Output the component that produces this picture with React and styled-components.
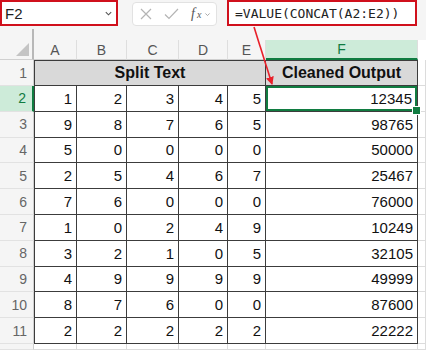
import React from 'react'
import styled, { createGlobalStyle, css } from 'styled-components'

const GlobalStyle = createGlobalStyle`
  html, body {
    margin: 0;
    padding: 0;
    background: #fff;
  }
  * {
    box-sizing: border-box;
  }
`

const GREEN = '#107c41'
const RED = '#d0101c'
const TABLE_LINE = '#3c3c3c'
const GRID_LINE = '#dcdcdc'

const Page = styled.div`
  position: relative;
  width: 426px;
  height: 350px;
  overflow: hidden;
  background: #fff;
  font-family: 'Liberation Sans', Arial, sans-serif;
`

const TopBar = styled.div`
  display: flex;
  align-items: flex-start;
  height: 40px;
  background: #f5f5f5;
`

const NameBox = styled.div`
  display: flex;
  align-items: center;
  justify-content: space-between;
  width: 118px;
  height: 26px;
  padding: 0 3px 0 3px;
  background: #fff;
  border: 2px solid ${RED};
  font-size: 15px;
  color: #222;
`

const Chevron = ({ size = 9, color = '#555' }) => (
  <svg width={size} height={size} viewBox="0 0 10 10">
    <path d="M2 3.5 L5 6.5 L8 3.5" fill="none" stroke={color} strokeWidth="1.2" />
  </svg>
)

const IconBox = styled.div`
  display: flex;
  align-items: center;
  gap: 12px;
  width: 85px;
  height: 24px;
  margin: 2px 0 0 14px;
  padding: 0 0 0 7px;
  background: #fff;
  border: 1px solid #e2e2e2;
  border-radius: 4px;
`

const Fx = styled.span`
  display: flex;
  align-items: center;
  gap: 3px;
  font-family: 'Liberation Serif', serif;
  font-style: italic;
  font-size: 14px;
  color: #555;
  & sub {
    font-size: 10px;
    vertical-align: baseline;
    margin-left: -1px;
  }
`

const FormulaBox = styled.div`
  display: flex;
  align-items: center;
  width: 190px;
  height: 26px;
  margin-left: 10px;
  padding-left: 6px;
  background: #fff;
  border: 2px solid ${RED};
  font-family: 'DejaVu Sans Mono', 'Liberation Mono', monospace;
  font-size: 13px;
  color: #222;
`

const Grid = styled.div`
  display: grid;
  grid-template-columns: 34px 43px 50px 52px 49px 38px 152px 8px;
  grid-template-rows: 20px 26px repeat(10, 25.8px) 1fr;
  height: 310px;
`

const Corner = styled.div`
  position: relative;
  background: #f5f5f5;
  border-right: 2px solid #b8b8b8;
  border-bottom: 1px solid #d0d0d0;
  &::before {
    content: '';
    position: absolute;
    right: -2px;
    top: -11px;
    width: 2px;
    height: 11px;
    background: #b8b8b8;
  }
  &::after {
    content: '';
    position: absolute;
    right: 3px;
    bottom: 3px;
    width: 0;
    height: 0;
    border-left: 13px solid transparent;
    border-bottom: 13px solid #c4c4c4;
  }
`

const ColHead = styled.div`
  display: flex;
  align-items: center;
  justify-content: center;
  background: #f5f5f5;
  border-right: 1px solid #dedede;
  border-bottom: 1px solid #d0d0d0;
  font-size: 14px;
  color: #555;
  ${({ $active }) =>
    $active &&
    css`
      background: #cdebd9;
      color: ${GREEN};
      border-bottom: 2px solid ${GREEN};
    `}
`

const RowHead = styled.div`
  display: flex;
  align-items: center;
  justify-content: flex-end;
  padding-right: 6px;
  background: #f5f5f5;
  border-right: 1px solid #cfcfcf;
  border-bottom: 1px solid #e2e2e2;
  font-size: 14px;
  color: #666;
  ${({ $active }) =>
    $active &&
    css`
      background: #cdebd9;
      color: ${GREEN};
      border-right: 2px solid ${GREEN};
    `}
`

const Cell = styled.div`
  position: relative;
  display: flex;
  align-items: center;
  justify-content: flex-end;
  padding-right: 4px;
  border-right: 1px solid ${TABLE_LINE};
  border-bottom: 1px solid ${TABLE_LINE};
  border-left: ${({ $first }) => ($first ? `1px solid ${TABLE_LINE}` : 'none')};
  font-size: 15px;
  color: #111;
  ${({ $selected }) =>
    $selected &&
    css`
      box-shadow: inset 0 0 0 2px ${GREEN};
      padding-right: 5px;
      &::after {
        content: '';
        position: absolute;
        right: -4px;
        bottom: -4px;
        width: 7px;
        height: 7px;
        background: ${GREEN};
        border: 1px solid #fff;
        z-index: 2;
      }
    `}
`

const TitleCell = styled.div`
  display: flex;
  align-items: center;
  justify-content: center;
  grid-column: ${({ $span }) => `span ${$span}`};
  background: #d9d9d9;
  border-top: 1px solid ${TABLE_LINE};
  border-right: 1px solid ${TABLE_LINE};
  border-bottom: 1px solid ${TABLE_LINE};
  border-left: ${({ $first }) => ($first ? `1px solid ${TABLE_LINE}` : 'none')};
  font-size: 16px;
  font-weight: bold;
  color: #111;
`

const Blank = styled.div`
  border-right: 1px solid ${GRID_LINE};
  border-bottom: 1px solid ${GRID_LINE};
`

const Arrow = styled.svg`
  position: absolute;
  left: 0;
  top: 0;
  pointer-events: none;
`

const rows = [
  [1, 2, 3, 4, 5, 12345],
  [9, 8, 7, 6, 5, 98765],
  [5, 0, 0, 0, 0, 50000],
  [2, 5, 4, 6, 7, 25467],
  [7, 6, 0, 0, 0, 76000],
  [1, 0, 2, 4, 9, 10249],
  [3, 2, 1, 0, 5, 32105],
  [4, 9, 9, 9, 9, 49999],
  [8, 7, 6, 0, 0, 87600],
  [2, 2, 2, 2, 2, 22222],
]

const cols = ['A', 'B', 'C', 'D', 'E', 'F']

export default function App() {
  return (
    <Page>
      <GlobalStyle />
      <TopBar>
        <NameBox>
          F2
          <Chevron />
        </NameBox>
        <IconBox>
          <svg width="12" height="12" viewBox="0 0 12 12">
            <path d="M1 1 L11 11 M11 1 L1 11" stroke="#b4b4b4" strokeWidth="1.2" fill="none" />
          </svg>
          <svg width="15" height="12" viewBox="0 0 15 12">
            <path d="M1 6.5 L5 10.5 L14 1" stroke="#b4b4b4" strokeWidth="1.2" fill="none" />
          </svg>
          <Fx>
            f<sub>x</sub>
            <Chevron size={7} color="#999" />
          </Fx>
        </IconBox>
        <FormulaBox>=VALUE(CONCAT(A2:E2))</FormulaBox>
      </TopBar>

      <Grid>
        <Corner />
        {cols.map((c) => (
          <ColHead key={c} $active={c === 'F'}>
            {c}
          </ColHead>
        ))}
        <div />

        <RowHead>1</RowHead>
        <TitleCell $span={5} $first>
          Split Text
        </TitleCell>
        <TitleCell $span={1}>Cleaned Output</TitleCell>
        <Blank />

        {rows.map((r, i) => (
          <React.Fragment key={i}>
            <RowHead $active={i === 0}>{i + 2}</RowHead>
            {r.map((v, j) => (
              <Cell key={j} $first={j === 0} $selected={i === 0 && j === 5}>
                {v}
              </Cell>
            ))}
            <Blank />
          </React.Fragment>
        ))}

        <RowHead />
        {cols.map((c) => (
          <Blank key={c} />
        ))}
        <Blank />
      </Grid>

      <Arrow width="426" height="350" viewBox="0 0 426 350">
        <defs>
          <marker id="head" markerWidth="8" markerHeight="8" refX="7" refY="4" orient="auto" markerUnits="userSpaceOnUse">
            <path d="M0 0 L8 4 L0 8 Z" fill="#e8202a" />
          </marker>
        </defs>
        <line x1="254" y1="27" x2="272" y2="84" stroke="#e8202a" strokeWidth="1.6" markerEnd="url(#head)" />
      </Arrow>
    </Page>
  )
}
